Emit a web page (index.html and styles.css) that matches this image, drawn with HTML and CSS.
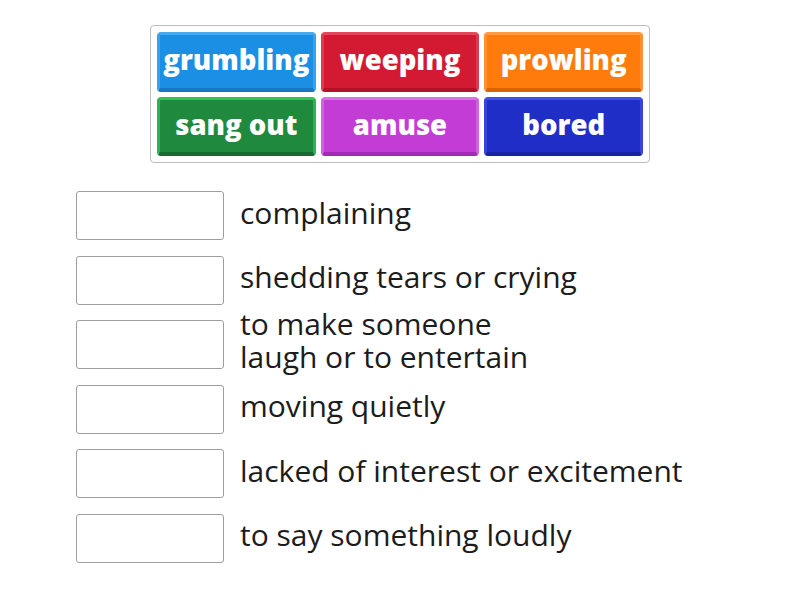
FILE: index.html
```html
<!DOCTYPE html>
<html lang="en">
<head>
    <meta charset="UTF-8">
    <title>Match up</title>
    <link rel="stylesheet" href="styles.css">
</head>
<body>
    <div class="bank">
        <div class="tile blue">grumbling</div>
        <div class="tile red">weeping</div>
        <div class="tile orange">prowling</div>
        <div class="tile green">sang out</div>
        <div class="tile purple">amuse</div>
        <div class="tile navy">bored</div>
    </div>

    <div class="pairs">
        <div class="pair">
            <div class="slot"></div>
            <div class="clue">complaining</div>
        </div>
        <div class="pair">
            <div class="slot"></div>
            <div class="clue">shedding tears or crying</div>
        </div>
        <div class="pair">
            <div class="slot"></div>
            <div class="clue two-line">to make someone<br>laugh or to entertain</div>
        </div>
        <div class="pair">
            <div class="slot"></div>
            <div class="clue">moving quietly</div>
        </div>
        <div class="pair">
            <div class="slot"></div>
            <div class="clue">lacked of interest or excitement</div>
        </div>
        <div class="pair">
            <div class="slot"></div>
            <div class="clue">to say something loudly</div>
        </div>
    </div>
</body>
</html>
```

FILE: styles.css
```css
* {
    margin: 0;
    padding: 0;
    box-sizing: border-box;
}

body {
    font-family: "Open Sans", Arial, sans-serif;
    background-color: #ffffff;
    color: #222;
    width: 800px;
    height: 600px;
    overflow: hidden;
}

.bank {
    width: 500px;
    height: 138px;
    margin: 25px auto 0;
    padding: 6px;
    border: 1px solid #bdbdbd;
    border-radius: 4px;
    display: grid;
    grid-template-columns: repeat(3, 1fr);
    grid-template-rows: 60px 59px;
    gap: 5px;
}

.tile {
    display: flex;
    align-items: center;
    justify-content: center;
    color: #fff;
    font-weight: 800;
    font-size: 27.5px;
    border-radius: 4px;
    border: 3px solid;
    border-bottom-width: 4px;
    padding-bottom: 4px;
    white-space: nowrap;
}

.blue {
    background-color: #1a8fe3;
    border-color: #46aaef #3aa2ec #1677c4;
}

.red {
    background-color: #d41a32;
    border-color: #e2485b #de3a4e #b3122a;
}

.orange {
    background-color: #ff7b0c;
    border-color: #ff9a40 #ff9030 #db6400;
}

.green {
    background-color: #1f8a3e;
    border-color: #2fc35c #2bb354 #176d31;
}

.purple {
    background-color: #c43cd6;
    border-color: #d872e4 #d062e0 #a22ab4;
}

.navy {
    background-color: #1f2ec6;
    border-color: #4250dd #3645d6 #1823a0;
}

.pairs {
    margin-top: 28px;
    padding-left: 76px;
}

.pair {
    display: flex;
    align-items: center;
    height: 49px;
    margin-bottom: 15.5px;
}

.slot {
    width: 148px;
    height: 49px;
    border: 1px solid #9e9e9e;
    border-radius: 3px;
    background-color: #fff;
    flex-shrink: 0;
}

.clue {
    margin-left: 16px;
    font-size: 30px;
    line-height: 33px;
    color: #1c1c1c;
    white-space: nowrap;
    padding-bottom: 7px;
}

.two-line {
    padding-bottom: 10px;
}
```
